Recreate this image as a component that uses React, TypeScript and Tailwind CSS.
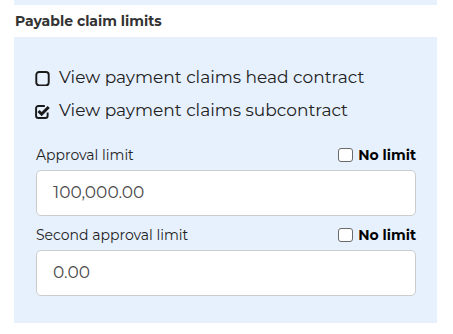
import { useState } from 'react';

function SquareIcon() {
  return (
    <svg viewBox="0 0 14 14" className="w-[15px] h-[15px] shrink-0" fill="none" stroke="#1a1a1a" strokeWidth="1.8">
      <rect x="1.2" y="1" width="11.6" height="12.4" rx="2.6" />
    </svg>
  );
}

function CheckSquareIcon() {
  return (
    <svg viewBox="0 0 14 14" className="w-[15px] h-[15px] shrink-0" fill="none" stroke="#1a1a1a">
      <path d="M11.8 8v2.9a2.2 2.2 0 0 1-2.2 2.2H3.2A2.2 2.2 0 0 1 1 10.9V4a2.2 2.2 0 0 1 2.2-2.2h6" strokeWidth="1.8" />
      <path d="M3.3 6.5l2.9 2.9 6.6-6.6" strokeWidth="2.8" />
    </svg>
  );
}

function LimitField({ label, value }: { label: string; value: string }) {
  const [noLimit, setNoLimit] = useState(false);
  return (
    <div className="flex flex-col">
      <div className="flex items-center justify-between h-[20px]">
        <span className="text-[14px] text-[#222]">{label}</span>
        <label className="flex items-center gap-[5px] cursor-pointer">
          <input
            type="checkbox"
            checked={noLimit}
            onChange={() => setNoLimit(!noLimit)}
            className="appearance-none w-[15px] h-[14px] rounded-[3px] border border-[#6b6b6b] bg-white"
          />
          <span className="text-[14px] font-bold text-black">No limit</span>
        </label>
      </div>
      <div className="mt-[5px] h-[46px] rounded-[5px] border border-[#ccc] bg-white flex items-center px-[16px]">
        <span className="text-[17px] text-[#4a4a4a]">{value}</span>
      </div>
    </div>
  );
}

export default function App() {
  return (
    <div className="w-[453px] h-[334px] bg-white px-[14px] font-['Montserrat','DejaVu_Sans',sans-serif] overflow-hidden">
      <div className="h-[5px] w-[423px] bg-[#e7f1fe]" />
      <h2 className="h-[32px] flex items-center px-px text-[14px] font-bold text-[#333]">Payable claim limits</h2>
      <div className="w-[423px] h-[286px] bg-[#e7f1fe] px-[21px] pt-[30px]">
        <div className="flex flex-col gap-[11px]">
          <div className="flex items-center gap-[9px] h-[22px]">
            <SquareIcon />
            <span className="text-[17px] text-[#222]">View payment claims head contract</span>
          </div>
          <div className="flex items-center gap-[9px] h-[22px]">
            <CheckSquareIcon />
            <span className="text-[17px] text-[#222]">View payment claims subcontract</span>
          </div>
        </div>
        <div className="mt-[23px] flex flex-col gap-[9px] pl-px">
          <LimitField label="Approval limit" value="100,000.00" />
          <LimitField label="Second approval limit" value="0.00" />
        </div>
      </div>
    </div>
  );
}
